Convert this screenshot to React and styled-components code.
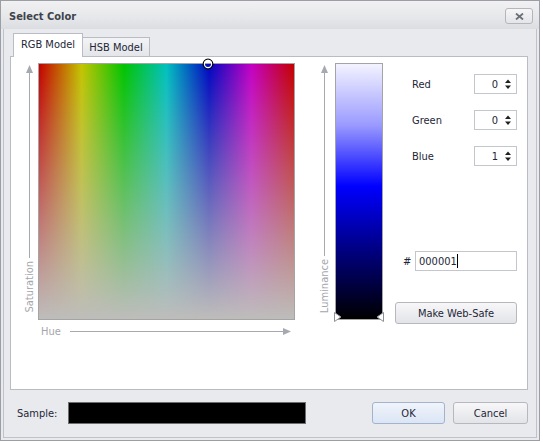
import React from 'react';
import styled, { createGlobalStyle } from 'styled-components';

const GlobalStyle = createGlobalStyle`
  html, body {
    margin: 0;
    padding: 0;
    background: #ffffff;
  }
  * {
    box-sizing: border-box;
  }
`;

const uiFont = `"DejaVu Sans Condensed", "Liberation Sans", sans-serif`;

const Window = styled.div`
  width: 540px;
  height: 441px;
  border: 1px solid #9c9ea5;
  background: #e9eaee;
  display: flex;
  flex-direction: column;
  font-family: ${uiFont};
  font-size: 11px;
  color: #1e2738;
`;

const TitleBar = styled.div`
  height: 28px;
  flex: none;
  display: flex;
  align-items: center;
  padding: 3px 6px 0 8px;
  background: linear-gradient(to bottom, #f1f1f3 0%, #e6e7ea 60%, #dcdde1 100%);
`;

const Title = styled.div`
  flex: 1;
  font-weight: bold;
  font-size: 11px;
  color: #3e434b;
`;

const CloseButton = styled.div`
  width: 28px;
  height: 16px;
  margin-bottom: 1px;
  border: 1px solid #b4b6bc;
  border-radius: 3px;
  background: linear-gradient(to bottom, #f6f6f8, #e4e5e9);
  display: flex;
  align-items: center;
  justify-content: center;
`;

const Client = styled.div`
  flex: 1;
  margin: 0 2px 2px;
  border: 1px solid #c0c2c8;
  border-top: none;
  padding: 4px 0 0 6px;
  display: flex;
  flex-direction: column;
`;

const TabStrip = styled.div`
  display: flex;
  align-items: flex-end;
  height: 23px;
  padding-left: 3px;
  position: relative;
  z-index: 1;
`;

const Tab = styled.div`
  display: flex;
  align-items: center;
  justify-content: center;
  border: 1px solid #b9bcc2;
  border-bottom: none;
  ${p => p.$active
    ? `
      width: 70px;
      height: 24px;
      margin-bottom: -1px;
      background: #ffffff;
      padding-bottom: 2px;
    `
    : `
      width: 67px;
      height: 19px;
      border-left: none;
      background: linear-gradient(to bottom, #f3f4f6, #e4e5e9);
    `}
`;

const Panel = styled.div`
  width: 518px;
  height: 334px;
  background: #ffffff;
  border: 1px solid #b9bcc2;
`;

const Editor = styled.div`
  display: flex;
  align-items: flex-start;
  padding: 6px 0 0 9px;
`;

const PickerGroup = styled.div`
  display: grid;
  grid-template-columns: 18px 257px;
  grid-template-rows: 257px 22px;
`;

const VAxis = styled.div`
  display: flex;
  flex-direction: column;
  align-items: center;
  width: ${p => p.$width || 18}px;
  height: 257px;
  padding: 2px 0 ${p => p.$bottom || 7}px;
`;

const AxisLine = styled.div`
  flex: 1;
  width: 1px;
  background: #a6a9af;
`;

const AxisLabel = styled.span`
  writing-mode: vertical-rl;
  transform: rotate(180deg);
  color: #a3a6ad;
  font-size: 11px;
  line-height: 11px;
  margin-top: 3px;
`;

const HueSatField = styled.div`
  position: relative;
  width: 257px;
  height: 257px;
  border: 1px solid #a4a4a4;
  background:
    linear-gradient(to bottom, rgba(190, 189, 187, 0) 0%, rgba(190, 189, 187, 1) 100%),
    linear-gradient(to right, #c40000 0%, #c4c400 16.7%, #00c400 33.3%, #00c0c0 50%, #0008c0 66.7%, #c400c4 83.3%, #c40000 100%);
`;

const Marker = styled.svg`
  position: absolute;
  left: 163px;
  top: -6px;
`;

const HAxis = styled.div`
  grid-column: 2;
  display: flex;
  align-items: center;
  padding: 0 4px 0 3px;
`;

const HAxisLabel = styled.span`
  color: #a3a6ad;
  margin-right: 9px;
`;

const HAxisLine = styled.div`
  flex: 1;
  height: 1px;
  background: #a6a9af;
`;

const LumGroup = styled.div`
  display: flex;
  margin-left: 21px;
`;

const LumBar = styled.div`
  position: relative;
  width: 48px;
  height: 257px;
  margin-left: 3px;
  border: 1px solid #a4a4a4;
  background: linear-gradient(to bottom, #f3f3ff 0%, #9a9aff 24%, #0000ff 48%, #00007c 74%, #000000 100%);
`;

const LumThumb = styled.svg`
  position: absolute;
  bottom: -3px;
  ${p => (p.$side === 'left' ? 'left: -2px;' : 'right: -2px;')}
`;

const ChannelColumn = styled.div`
  width: 122px;
  margin: 11px 0 0 12px;
  display: flex;
  flex-direction: column;
`;

const ChannelRow = styled.div`
  display: flex;
  align-items: center;
  justify-content: space-between;
  height: 20px;
  padding-left: 17px;
  margin-bottom: 16px;
`;

const SpinEdit = styled.div`
  position: relative;
  width: 43px;
  height: 20px;
  border: 1px solid #c3c6cc;
  display: flex;
  align-items: center;
  justify-content: flex-end;
  padding-right: 18px;
`;

const SpinArrows = styled.svg`
  position: absolute;
  right: 4px;
  top: 3px;
`;

const HexRow = styled.div`
  display: flex;
  align-items: center;
  justify-content: space-between;
  padding-left: 8px;
  margin-top: 69px;
`;

const HexInput = styled.div`
  width: 102px;
  height: 20px;
  border: 1px solid #c3c6cc;
  display: flex;
  align-items: center;
  padding-left: 3px;
`;

const Caret = styled.span`
  width: 1px;
  height: 14px;
  background: #000000;
`;

const Button = styled.div`
  width: ${p => p.$width}px;
  height: 22px;
  display: flex;
  align-items: center;
  justify-content: center;
  border: 1px solid ${p => (p.$default ? '#a3b3cc' : '#b6b8be')};
  border-radius: 3px;
  background: ${p => (p.$default
    ? 'linear-gradient(to bottom, #f0f4fb, #dbe5f5)'
    : 'linear-gradient(to bottom, #f7f7f9, #e3e4e8)')};
  color: #1e2738;
`;

const WebSafeButton = styled(Button)`
  margin-top: 31px;
`;

const Footer = styled.div`
  width: 518px;
  flex: 1;
  display: flex;
  align-items: center;
  padding: 0 0 1px 7px;
`;

const SampleLabel = styled.span`
  width: 51px;
`;

const SampleSwatch = styled.div`
  width: 238px;
  height: 22px;
  background: #000000;
  border: 1px solid #6e6e6e;
`;

const FooterButtons = styled.div`
  margin-left: auto;
  display: flex;
  gap: 8px;
`;

const UpArrow = () => (
  <svg width="7" height="8" viewBox="0 0 7 8">
    <polygon points="3.5,0 7,8 0,8" fill="#a6a9af" />
  </svg>
);

const RightArrow = () => (
  <svg width="8" height="7" viewBox="0 0 8 7">
    <polygon points="0,0 8,3.5 0,7" fill="#a6a9af" />
  </svg>
);

// small up/down steppers drawn at the right edge of each number box
const Spin = ({ value }) => (
  <SpinEdit>
    {value}
    <SpinArrows width="8" height="12" viewBox="0 0 8 12">
      <polygon points="4,1.5 7,5 1,5" fill="#202020" />
      <polygon points="1,7.5 7,7.5 4,11" fill="#202020" />
    </SpinArrows>
  </SpinEdit>
);

const channels = [
  { name: 'Red', value: 0 },
  { name: 'Green', value: 0 },
  { name: 'Blue', value: 1 },
];

export default function App() {
  return (
    <>
      <GlobalStyle />
      <Window>
        <TitleBar>
          <Title>Select Color</Title>
          <CloseButton>
            <svg width="9" height="7" viewBox="0 0 9 7">
              <path d="M1 0.5 L8 6.5 M8 0.5 L1 6.5" stroke="#6b6f77" strokeWidth="1.8" />
            </svg>
          </CloseButton>
        </TitleBar>

        <Client>
          <TabStrip>
            <Tab $active>RGB Model</Tab>
            <Tab>HSB Model</Tab>
          </TabStrip>

          <Panel>
            <Editor>
              <PickerGroup>
                <VAxis>
                  <UpArrow />
                  <AxisLine />
                  <AxisLabel>Saturation</AxisLabel>
                </VAxis>
                <HueSatField>
                  <Marker width="12" height="12" viewBox="0 0 12 12">
                    <circle cx="6" cy="6" r="4.8" fill="none" stroke="#000000" strokeWidth="1.2" />
                    <circle cx="6" cy="6" r="3.6" fill="none" stroke="#ffffff" strokeWidth="1.2" />
                  </Marker>
                </HueSatField>
                <HAxis>
                  <HAxisLabel>Hue</HAxisLabel>
                  <HAxisLine />
                  <RightArrow />
                </HAxis>
              </PickerGroup>

              <LumGroup>
                <VAxis $width={16}>
                  <UpArrow />
                  <AxisLine />
                  <AxisLabel>Luminance</AxisLabel>
                </VAxis>
                <LumBar>
                  <LumThumb $side="left" width="8" height="10" viewBox="0 0 8 10">
                    <polygon points="0.5,0.5 7,5 0.5,9.5" fill="#ffffff" stroke="#8d9096" strokeWidth="1" />
                  </LumThumb>
                  <LumThumb $side="right" width="8" height="10" viewBox="0 0 8 10">
                    <polygon points="7.5,0.5 1,5 7.5,9.5" fill="#ffffff" stroke="#8d9096" strokeWidth="1" />
                  </LumThumb>
                </LumBar>
              </LumGroup>

              <ChannelColumn>
                {channels.map(c => (
                  <ChannelRow key={c.name}>
                    <span>{c.name}</span>
                    <Spin value={c.value} />
                  </ChannelRow>
                ))}
                <HexRow>
                  <span>#</span>
                  <HexInput>
                    000001
                    <Caret />
                  </HexInput>
                </HexRow>
                <WebSafeButton $width={122}>Make Web-Safe</WebSafeButton>
              </ChannelColumn>
            </Editor>
          </Panel>

          <Footer>
            <SampleLabel>Sample:</SampleLabel>
            <SampleSwatch />
            <FooterButtons>
              <Button $width={73} $default>OK</Button>
              <Button $width={75}>Cancel</Button>
            </FooterButtons>
          </Footer>
        </Client>
      </Window>
    </>
  );
}
